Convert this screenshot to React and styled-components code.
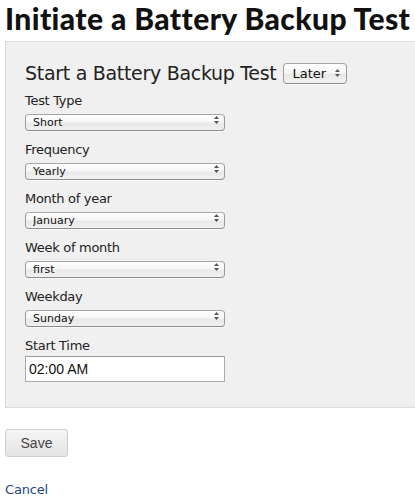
import React, { useState } from 'react';
import styled, { createGlobalStyle } from 'styled-components';

const GlobalStyle = createGlobalStyle`
  html, body {
    margin: 0;
    padding: 0;
    background: #fff;
    overflow: hidden;
  }
  body {
    font-family: "DejaVu Sans", "Liberation Sans", sans-serif;
    color: #222;
  }
`;

const Page = styled.div`
  padding-left: 5px;
`;

const Title = styled.h1`
  margin: 0;
  height: 36px;
  font-family: Lato, "Liberation Sans", sans-serif;
  font-weight: 900;
  font-size: 30px;
  letter-spacing: 0.4px;
  line-height: 36px;
  color: #111;
  white-space: nowrap;
`;

// the grey box runs to the right edge of the window, so it has no right border
const Panel = styled.form`
  margin: 5px 0 0 0;
  padding: 20px 20px 25px 19px;
  background: #f0f0f0;
  border: 1px solid #dcdcdc;
  border-right: none;
`;

const PanelHead = styled.div`
  display: flex;
  align-items: center;
  gap: 6px;
  height: 22px;
  margin-bottom: 9px;
`;

const PanelTitle = styled.h2`
  margin: 0;
  font-size: 19px;
  font-weight: normal;
  letter-spacing: -0.3px;
  line-height: 22px;
  color: #222;
  white-space: nowrap;
`;

const Field = styled.div`
  display: flex;
  flex-direction: column;
  align-items: flex-start;
  margin-bottom: ${({ last }) => (last ? '0' : '14px')};
`;

const Label = styled.label`
  font-size: 13px;
  letter-spacing: -0.3px;
  line-height: 16px;
  height: 16px;
  margin-bottom: 2px;
  color: #222;
`;

const SelectWrap = styled.div`
  position: relative;
  width: ${({ width }) => width}px;
  height: ${({ height }) => height}px;
`;

const NativeSelect = styled.select`
  appearance: none;
  -webkit-appearance: none;
  box-sizing: border-box;
  width: 100%;
  height: 100%;
  margin: 0;
  padding: 0 0 0 ${({ pad }) => pad}px;
  border: 1px solid #9c9c9c;
  border-top-color: #a8a8a8;
  border-bottom-color: #8c8c8c;
  border-radius: 4px;
  background: linear-gradient(#ffffff, #f6f6f6 45%, #e9e9e9 55%, #f1f1f1);
  box-shadow: 0 1px 0 rgba(255, 255, 255, 0.6);
  font-family: "DejaVu Sans", sans-serif;
  font-size: ${({ fs }) => fs}px;
  color: #111;
  outline: none;
`;

const Arrows = styled.svg`
  position: absolute;
  right: ${({ right }) => right}px;
  top: 50%;
  transform: translateY(-50%);
  pointer-events: none;
`;

const Select = ({ value, options, width = 200, height = 17, fs = 11, pad = 7, right = 6, onChange }) => (
  <SelectWrap width={width} height={height}>
    <NativeSelect value={value} onChange={onChange} fs={fs} pad={pad}>
      {options.map((o) => (
        <option key={o} value={o}>{o}</option>
      ))}
    </NativeSelect>
    <Arrows right={right} width="5" height="8" viewBox="0 0 5 8">
      <path d="M2.5 0 L5 3 L0 3 Z" fill="#555" />
      <path d="M0 5 L5 5 L2.5 8 Z" fill="#555" />
    </Arrows>
  </SelectWrap>
);

const TimeInput = styled.input`
  box-sizing: border-box;
  width: 200px;
  height: 26px;
  margin: 0;
  padding: 0 3px;
  border: 1px solid #ababab;
  border-top-color: #999;
  background: #fff;
  font-family: "Liberation Sans", Arial, sans-serif;
  font-size: 14px;
  color: #111;
  outline: none;
`;

const Actions = styled.div`
  display: flex;
  flex-direction: column;
  align-items: flex-start;
  padding-top: 21px;
`;

const SaveButton = styled.button`
  box-sizing: border-box;
  width: 63px;
  height: 28px;
  padding: 0;
  border: 1px solid #cdcdcd;
  border-radius: 3px;
  background: linear-gradient(#f6f6f6, #ececec 50%, #e4e4e4);
  font-family: "Liberation Sans", Arial, sans-serif;
  font-size: 14px;
  color: #444;
  cursor: pointer;
`;

const CancelLink = styled.a`
  margin-top: 25px;
  font-size: 13px;
  letter-spacing: -0.2px;
  line-height: 16px;
  color: #1d4a86;
  text-decoration: none;
  cursor: pointer;
`;

const months = ['January', 'February', 'March', 'April', 'May', 'June', 'July', 'August', 'September', 'October', 'November', 'December'];
const weekdays = ['Sunday', 'Monday', 'Tuesday', 'Wednesday', 'Thursday', 'Friday', 'Saturday'];

const App = () => {
  const [form, setForm] = useState({
    when: 'Later',
    testType: 'Short',
    frequency: 'Yearly',
    month: 'January',
    week: 'first',
    weekday: 'Sunday',
    startTime: '02:00 AM',
  });

  const set = (name) => (e) => setForm((prev) => ({ ...prev, [name]: e.target.value }));

  return (
    <>
      <GlobalStyle />
      <Page>
        <Title>Initiate a Battery Backup Test</Title>
        <Panel onSubmit={(e) => e.preventDefault()}>
          <PanelHead>
            <PanelTitle>Start a Battery Backup Test</PanelTitle>
            <Select
              value={form.when}
              onChange={set('when')}
              options={['Now', 'Later']}
              width={64}
              height={21}
              fs={13}
              pad={9}
              right={7}
            />
          </PanelHead>

          <Field>
            <Label>Test Type</Label>
            <Select value={form.testType} onChange={set('testType')} options={['Short', 'Long']} />
          </Field>
          <Field>
            <Label>Frequency</Label>
            <Select value={form.frequency} onChange={set('frequency')} options={['Once', 'Weekly', 'Monthly', 'Yearly']} />
          </Field>
          <Field>
            <Label>Month of year</Label>
            <Select value={form.month} onChange={set('month')} options={months} />
          </Field>
          <Field>
            <Label>Week of month</Label>
            <Select value={form.week} onChange={set('week')} options={['first', 'second', 'third', 'fourth', 'last']} />
          </Field>
          <Field>
            <Label>Weekday</Label>
            <Select value={form.weekday} onChange={set('weekday')} options={weekdays} />
          </Field>
          <Field last>
            <Label>Start Time</Label>
            <TimeInput value={form.startTime} onChange={set('startTime')} />
          </Field>
        </Panel>
        <Actions>
          <SaveButton type="button">Save</SaveButton>
          <CancelLink>Cancel</CancelLink>
        </Actions>
      </Page>
    </>
  );
};

export default App;
